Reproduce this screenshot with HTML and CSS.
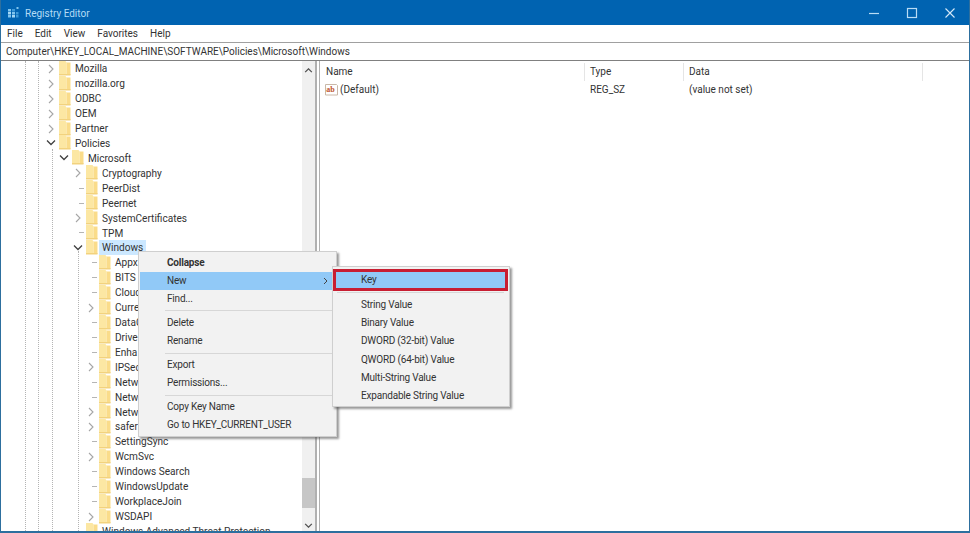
FILE: index.html
```html
<!DOCTYPE html>
<html lang="en">
<head>
<meta charset="utf-8">
<title>Registry Editor</title>
<link rel="stylesheet" href="styles.css">
</head>
<body>
<svg class="defs" width="0" height="0" aria-hidden="true">
  <symbol id="folder" viewBox="0 0 12 15">
    <path d="M0 0h6.500l1 1.500V14H0z" fill="#fce7a3"/>
    <path d="M7.500 1.500h4V14h-4z" fill="#fadc8a"/>
    <path d="M0 13h11.500v1.500H0z" fill="#f2d27e"/>
  </symbol>
  <symbol id="closed" viewBox="0 0 8 10"><path d="M2 1l4 4-4 4" fill="none" stroke="#a6a6a6" stroke-width="1.100"/></symbol>
  <symbol id="open" viewBox="0 0 10 8"><path d="M1 1.500l4 4 4-4" fill="none" stroke="#404040" stroke-width="1.300"/></symbol>
</svg>
<div class="window">
  <header class="titlebar">
    <svg class="app-icon" viewBox="0 0 11 11" aria-hidden="true">
      <rect x="0" y="2" width="3" height="2.500" fill="#7fc4ee"/><rect x="4" y="2" width="3" height="2.500" fill="#3f9ad8"/>
      <rect x="0" y="5" width="3" height="2.500" fill="#a5d8f5"/><rect x="4" y="5" width="3" height="2.500" fill="#7fc4ee"/>
      <rect x="0" y="8" width="3" height="2.500" fill="#7fc4ee"/><rect x="4" y="8" width="3" height="2.500" fill="#a5d8f5"/>
      <rect x="8" y="8" width="2.500" height="2.500" fill="#3f9ad8"/><rect x="8" y="5" width="2.500" height="2.500" fill="#3f9ad8"/>
      <rect x="8.500" y="0" width="2" height="2" fill="#7fc4ee"/>
    </svg>
    <span class="title">Registry Editor</span>
    <div class="controls">
      <svg class="ctl" viewBox="0 0 12 12" aria-hidden="true"><path d="M1 6.500h10" stroke="#b9dcf5" stroke-width="1.200"/></svg>
      <svg class="ctl" viewBox="0 0 12 12" aria-hidden="true"><rect x="1.500" y="1.500" width="9" height="9" fill="none" stroke="#b9dcf5" stroke-width="1.200"/></svg>
      <svg class="ctl" viewBox="0 0 12 12" aria-hidden="true"><path d="M1.500 1.500l9 9M10.500 1.500l-9 9" stroke="#d5e9f8" stroke-width="1.100"/></svg>
    </div>
  </header>
  <nav class="menubar">
    <span>File</span><span>Edit</span><span>View</span><span>Favorites</span><span>Help</span>
  </nav>
  <div class="address">Computer\HKEY_LOCAL_MACHINE\SOFTWARE\Policies\Microsoft\Windows</div>
  <main class="panes">
    <section class="tree-pane">
      <div class="tree">
        <i class="guide g1"></i><i class="guide g2"></i><i class="guide g3"></i><i class="guide g4"></i>
        <div class="row l3"><svg class="arrow"><use href="#closed"/></svg><svg class="folder"><use href="#folder"/></svg><span>Mozilla</span></div>
        <div class="row l3"><svg class="arrow"><use href="#closed"/></svg><svg class="folder"><use href="#folder"/></svg><span>mozilla.org</span></div>
        <div class="row l3"><svg class="arrow"><use href="#closed"/></svg><svg class="folder"><use href="#folder"/></svg><span>ODBC</span></div>
        <div class="row l3"><svg class="arrow"><use href="#closed"/></svg><svg class="folder"><use href="#folder"/></svg><span>OEM</span></div>
        <div class="row l3"><svg class="arrow"><use href="#closed"/></svg><svg class="folder"><use href="#folder"/></svg><span>Partner</span></div>
        <div class="row l3"><svg class="arrow down"><use href="#open"/></svg><svg class="folder"><use href="#folder"/></svg><span>Policies</span></div>
        <div class="row l4"><svg class="arrow down"><use href="#open"/></svg><svg class="folder"><use href="#folder"/></svg><span>Microsoft</span></div>
        <div class="row l5"><svg class="arrow"><use href="#closed"/></svg><svg class="folder"><use href="#folder"/></svg><span>Cryptography</span></div>
        <div class="row l5"><i class="tick"></i><svg class="folder"><use href="#folder"/></svg><span>PeerDist</span></div>
        <div class="row l5"><i class="tick"></i><svg class="folder"><use href="#folder"/></svg><span>Peernet</span></div>
        <div class="row l5"><svg class="arrow"><use href="#closed"/></svg><svg class="folder"><use href="#folder"/></svg><span>SystemCertificates</span></div>
        <div class="row l5"><i class="tick"></i><svg class="folder"><use href="#folder"/></svg><span>TPM</span></div>
        <div class="row l5"><svg class="arrow down"><use href="#open"/></svg><svg class="folder"><use href="#folder"/></svg><span class="selected">Windows</span></div>
        <div class="row l6"><i class="tick"></i><svg class="folder"><use href="#folder"/></svg><span>Appx</span></div>
        <div class="row l6"><i class="tick"></i><svg class="folder"><use href="#folder"/></svg><span>BITS</span></div>
        <div class="row l6"><i class="tick"></i><svg class="folder"><use href="#folder"/></svg><span>Cloud</span></div>
        <div class="row l6"><svg class="arrow"><use href="#closed"/></svg><svg class="folder"><use href="#folder"/></svg><span>Curre</span></div>
        <div class="row l6"><i class="tick"></i><svg class="folder"><use href="#folder"/></svg><span>DataC</span></div>
        <div class="row l6"><i class="tick"></i><svg class="folder"><use href="#folder"/></svg><span>Drive</span></div>
        <div class="row l6"><i class="tick"></i><svg class="folder"><use href="#folder"/></svg><span>Enha</span></div>
        <div class="row l6"><svg class="arrow"><use href="#closed"/></svg><svg class="folder"><use href="#folder"/></svg><span>IPSec</span></div>
        <div class="row l6"><i class="tick"></i><svg class="folder"><use href="#folder"/></svg><span>Netw</span></div>
        <div class="row l6"><i class="tick"></i><svg class="folder"><use href="#folder"/></svg><span>Netw</span></div>
        <div class="row l6"><svg class="arrow"><use href="#closed"/></svg><svg class="folder"><use href="#folder"/></svg><span>Netw</span></div>
        <div class="row l6"><svg class="arrow"><use href="#closed"/></svg><svg class="folder"><use href="#folder"/></svg><span>safer</span></div>
        <div class="row l6"><i class="tick"></i><svg class="folder"><use href="#folder"/></svg><span>SettingSync</span></div>
        <div class="row l6"><svg class="arrow"><use href="#closed"/></svg><svg class="folder"><use href="#folder"/></svg><span>WcmSvc</span></div>
        <div class="row l6"><i class="tick"></i><svg class="folder"><use href="#folder"/></svg><span>Windows Search</span></div>
        <div class="row l6"><i class="tick"></i><svg class="folder"><use href="#folder"/></svg><span>WindowsUpdate</span></div>
        <div class="row l6"><i class="tick"></i><svg class="folder"><use href="#folder"/></svg><span>WorkplaceJoin</span></div>
        <div class="row l6"><svg class="arrow"><use href="#closed"/></svg><svg class="folder"><use href="#folder"/></svg><span>WSDAPI</span></div>
        <div class="row l5"><i class="tick"></i><svg class="folder"><use href="#folder"/></svg><span>Windows Advanced Threat Protection</span></div>
      </div>
      <div class="scrollbar">
        <svg class="sb-arrow" viewBox="0 0 10 6" aria-hidden="true"><path d="M1 5l4-4 4 4" fill="none" stroke="#505050" stroke-width="1.500"/></svg>
        <div class="track"><div class="thumb"></div></div>
        <svg class="sb-arrow" viewBox="0 0 10 6" aria-hidden="true"><path d="M1 1l4 4 4-4" fill="none" stroke="#505050" stroke-width="1.500"/></svg>
      </div>
    </section>
    <div class="splitter"></div>
    <section class="list-pane">
      <div class="list-head">
        <span class="col-name">Name</span><span class="col-type">Type</span><span class="col-data">Data</span><span class="col-rest"></span>
      </div>
      <div class="list-row">
        <span class="col-name">
          <svg class="ab" viewBox="0 0 13 13" aria-hidden="true">
            <path d="M.5 1.500h11l1 1v9.500H.5z" fill="#fff" stroke="#c9b8a8"/>
            <text x="1.200" y="9" class="ab-text">ab</text>
          </svg>(Default)
        </span>
        <span class="col-type">REG_SZ</span><span class="col-data">(value not set)</span>
      </div>
    </section>
  </main>
</div>

<div class="menu context">
  <div class="item strong">Collapse</div>
  <div class="item hot">New<svg class="sub" viewBox="0 0 5 8" aria-hidden="true"><path d="M1 1l3 3-3 3" fill="none" stroke="#444" stroke-width="1"/></svg></div>
  <div class="item">Find...</div>
  <div class="sep"></div>
  <div class="item">Delete</div>
  <div class="item">Rename</div>
  <div class="sep"></div>
  <div class="item">Export</div>
  <div class="item">Permissions...</div>
  <div class="sep"></div>
  <div class="item">Copy Key Name</div>
  <div class="item">Go to HKEY_CURRENT_USER</div>
</div>
<div class="menu submenu">
  <div class="item hot key">Key</div>
  <div class="sep"></div>
  <div class="item">String Value</div>
  <div class="item">Binary Value</div>
  <div class="item">DWORD (32-bit) Value</div>
  <div class="item">QWORD (64-bit) Value</div>
  <div class="item">Multi-String Value</div>
  <div class="item">Expandable String Value</div>
</div>
</body>
</html>
```
FILE: styles.css
```css
* { box-sizing: border-box; }
html, body { margin: 0; height: 100%; }
body {
  width: 970px;
  height: 533px;
  overflow: hidden;
  position: relative;
  background: #fff;
  color: #333;
  font: 10px/15px Roboto, "Open Sans", sans-serif;
}
.defs { position: absolute; }

.window {
  height: 533px;
  display: flex;
  flex-direction: column;
  border: solid #2d6f9e;
  border-width: 0 1px 2px 1px;
  overflow: hidden;
}

.titlebar {
  flex: 0 0 25px;
  background: #0063b1;
  display: flex;
  align-items: center;
  padding-left: 7px;
  color: #b4dcf5;
  font-size: 10px;
}
.title { padding-top: 1px; }
.app-icon { width: 11px; height: 11px; margin-right: 6px; }
.controls { margin-left: auto; display: flex; gap: 26px; padding-right: 13px; }
.ctl { width: 12px; height: 12px; }

.menubar {
  flex: 0 0 17px;
  display: flex;
  gap: 12px;
  align-items: center;
  padding-left: 6px;
  background: #fff;
}
.address {
  flex: 0 0 18px;
  border-top: 1px solid #a0a0a0;
  border-bottom: 1px solid #808080;
  padding: 1px 0 0 5px;
  line-height: 16px;
  white-space: nowrap;
}

.panes { flex: 1; min-height: 0; display: flex; }
.tree-pane { flex: 0 0 314px; display: flex; position: relative; overflow: hidden; }
.tree { flex: 1; position: relative; padding-top: .4px; overflow: hidden; }
.scrollbar {
  flex: 0 0 13px;
  background: #f0f0f0;
  display: flex;
  flex-direction: column;
  align-items: center;
  padding: 7px 0 3px;
}
.sb-arrow { flex: 0 0 5px; width: 9px; height: 5px; }
.track { flex: 1; width: 100%; position: relative; }
.thumb { position: absolute; left: 0; right: 0; top: 405px; height: 30px; background: #c6c6c6; }

.splitter {
  flex: 0 0 5px;
  border-left: 2px solid #b0b0b0;
  border-right: 1px solid #b0b0b0;
  background: #fff;
}

.row {
  height: 14.930px;
  display: flex;
  align-items: center;
  white-space: nowrap;
  position: relative;
}
.l3 { padding-left: 45px; }
.l4 { padding-left: 58px; }
.l5 { padding-left: 72px; }
.l6 { padding-left: 85px; }
.arrow { width: 8px; height: 10px; flex: none; margin-right: 5px; margin-left: 1px; }
.arrow.down { width: 10px; height: 8px; margin-left: 0; margin-right: 4px; }
.tick {
  flex: none;
  width: 5px;
  height: 0;
  margin-left: 6px;
  margin-right: 3px;
  border-top: 1px solid #b5b5b5;
}
.folder { width: 12px; height: 15px; flex: none; margin-top: -1px; margin-left: -1px; }
.row span { margin-left: 3px; padding: 0 1px; font-size: 10.100px; }
.row span.selected { background: #cce8ff; margin-left: 1px; padding: 0 3px; height: 15px; }

.guide { position: absolute; width: 0; border-left: 1px dotted #b4b4b4; top: 0; bottom: 0; }
.g1 { left: 24px; }
.g2 { left: 37px; }
.g3 { left: 51px; top: 88px; }
.g4 { left: 77px; top: 190px; }

.list-pane { flex: 1; min-width: 0; }
.list-head, .list-row { display: flex; align-items: center; white-space: nowrap; }
.list-head { height: 21px; padding-top: 1px; }
.list-row { height: 15px; }
.col-name { flex: 0 0 265px; padding-left: 6px; display: flex; align-items: center; }
.col-type { flex: 0 0 99px; padding-left: 5px; }
.col-data { flex: 0 0 239px; padding-left: 5px; }
.list-head span { height: 18px; line-height: 18px; border-right: 1px solid #e5e5e5; }
.list-head .col-rest { border: 0; flex: 1; }
.ab { width: 13px; height: 13px; margin-right: 2px; margin-left: -1px; }
.ab-text { font: bold 8px "Liberation Serif", serif; fill: #c0552f; }

.menu {
  position: absolute;
  background: #f2f2f2;
  border: 1px solid #cfcfcf;
  box-shadow: 2px 2px 2px rgba(70, 70, 70, .55);
  letter-spacing: -.2px;
}
.item {
  height: 18.200px;
  line-height: 18px;
  padding-left: 26px;
  color: #333;
  white-space: nowrap;
  position: relative;
}
.strong { font-weight: 700; }
.hot { background: #91c9f7; }
.sep { height: 1px; margin: 2.400px 2px 2.400px 26px; background: #d7d7d7; }
.sub { position: absolute; right: 7px; top: 5px; width: 5px; height: 8px; }
.context { left: 138px; top: 251px; width: 199px; height: 186px; padding: 1.500px 1px; }
.context .item { padding-left: 27px; }
.context .sep { margin-left: 25px; margin-right: 0; }
.submenu { left: 332px; top: 266px; width: 178px; height: 141px; padding: 4px 3px 0 2px; }
.submenu .sep { margin: 2.900px 2px; }
.key { outline: 3px solid #c81e32; outline-offset: -1px; }
```
